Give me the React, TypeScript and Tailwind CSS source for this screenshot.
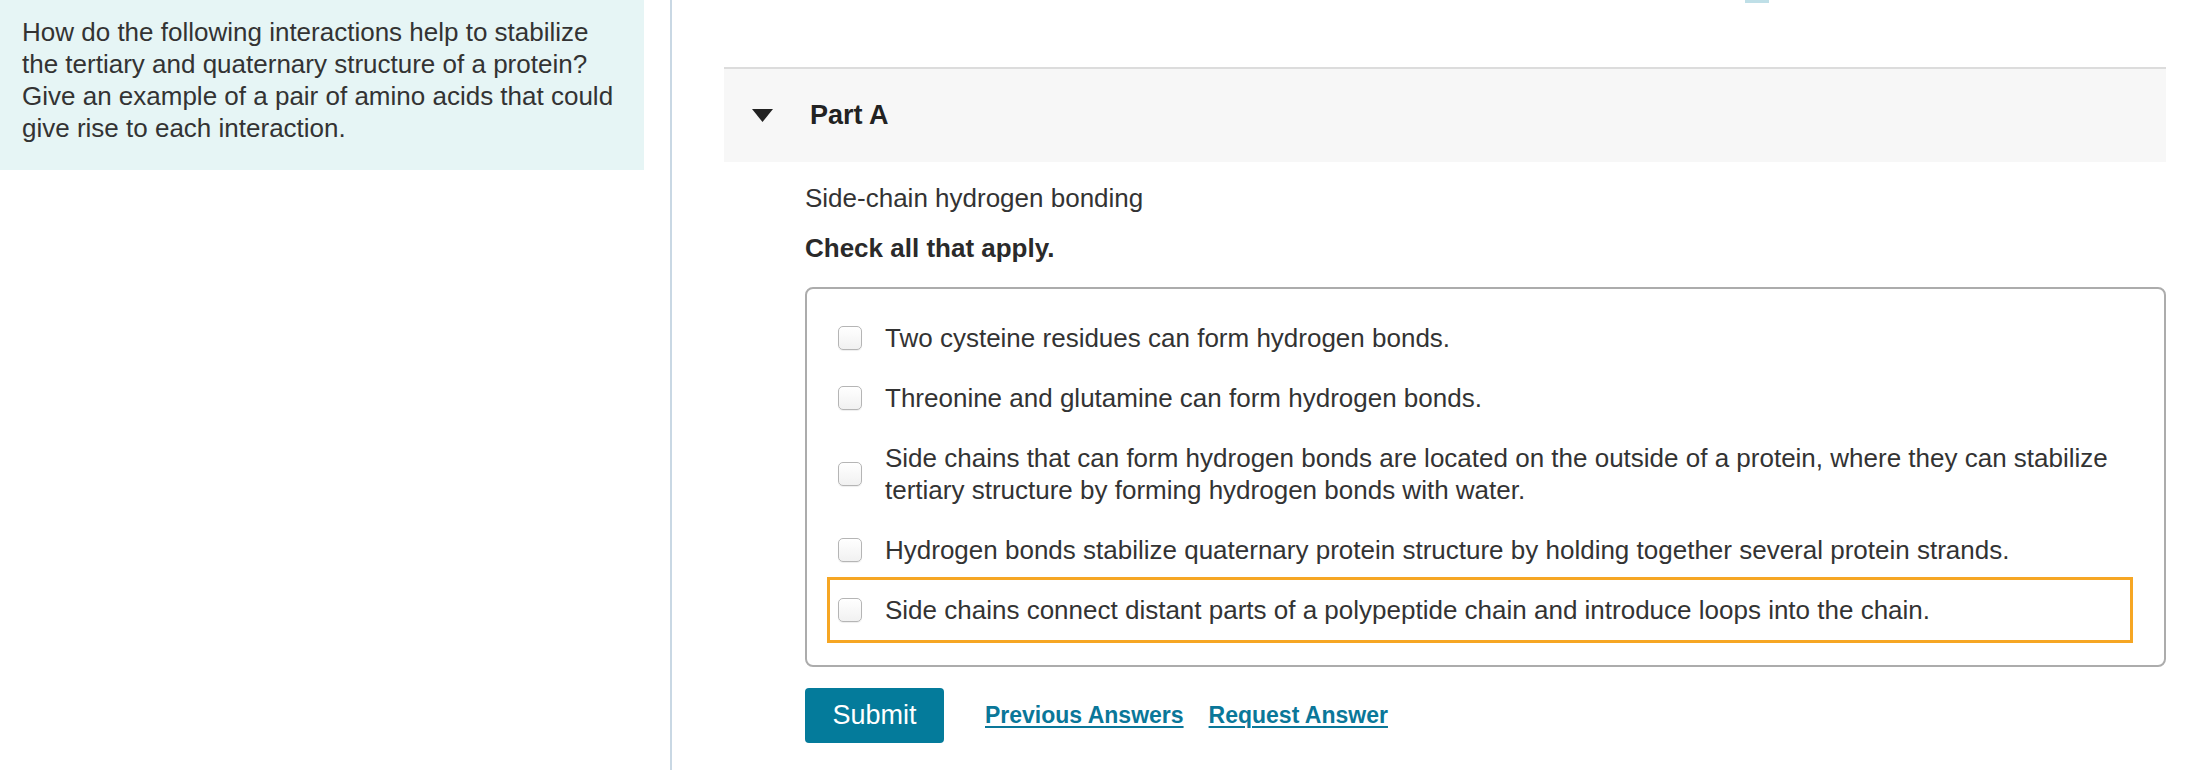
const options = [
  "Two cysteine residues can form hydrogen bonds.",
  "Threonine and glutamine can form hydrogen bonds.",
  "Side chains that can form hydrogen bonds are located on the outside of a protein, where they can stabilize tertiary structure by forming hydrogen bonds with water.",
  "Hydrogen bonds stabilize quaternary protein structure by holding together several protein strands.",
  "Side chains connect distant parts of a polypeptide chain and introduce loops into the chain.",
];

function CheckBox() {
  return (
    <span className="block h-[24px] w-[24px] shrink-0 rounded-[5px] border border-[#b5b5b5] bg-gradient-to-b from-white to-[#f1f1f1] shadow-[0_1px_1px_rgba(0,0,0,0.07)]" />
  );
}

export default function App() {
  return (
    <div className="flex h-[770px] w-[2192px] overflow-hidden bg-white font-['Liberation_Sans',Arial,sans-serif] text-[#333]">
      {/* question panel */}
      <div className="w-[644px] shrink-0">
        <div className="bg-[#e6f5f5] px-[22px] pt-[16px] pb-[26px] text-[26px] leading-[32px] text-[#333]">
          How do the following interactions help to stabilize the tertiary and
          quaternary structure of a protein? Give an example of a pair of amino
          acids that could give rise to each interaction.
        </div>
      </div>

      <div className="ml-[26px] w-[2px] shrink-0 bg-[#c9d8e4]" />

      <div className="flex-1 pl-[52px] pr-[26px]">
        {/* toolbar, scrolled almost out of view */}
        <div className="h-[67px]">
          <div className="flex h-[3px] justify-end overflow-hidden pr-[16px]">
            <div className="-mt-[21px] flex items-start gap-[24px] text-[22px] leading-[24px] text-[#b3d9e3]">
              <span className="mt-[2px] block h-[22px] w-[24px] bg-[#bfdfe7]" />
              <span>Review</span>
              <span>Constants</span>
              <span>Periodic Table</span>
            </div>
          </div>
        </div>

        {/* Part A header */}
        <div className="flex h-[95px] items-center border-t-[2px] border-[#dcdcdc] bg-[#f7f7f7] pl-[28px]">
          <svg width="21" height="13" viewBox="0 0 21 13" className="shrink-0">
            <path d="M0 0 L21 0 L10.5 13 Z" fill="#222" />
          </svg>
          <span className="ml-[37px] text-[27px] font-bold text-[#222]">Part A</span>
        </div>

        <div className="pl-[81px]">
          <p className="mt-[20px] text-[26px] leading-[32px]">Side-chain hydrogen bonding</p>
          <p className="mt-[18px] text-[26px] font-bold leading-[32px] text-[#2a2a2a]">
            Check all that apply.
          </p>

          <div className="mt-[23px] rounded-[8px] border-2 border-[#acacac] pl-[23px] pr-[34px] pt-[19px] pb-[25px]">
            {options.map((text, i) => (
              <div
                key={i}
                className={
                  i === options.length - 1
                    ? "flex items-center py-[14px] pl-[8px] ring-[3px] ring-[#f6a623]"
                    : "flex items-center py-[14px] pl-[8px]"
                }
              >
                <CheckBox />
                <span className="ml-[23px] text-[26px] leading-[32px] text-[#333]">{text}</span>
              </div>
            ))}
          </div>

          <div className="mt-[21px] flex items-center">
            <button className="h-[55px] w-[139px] rounded-[4px] bg-[#047b9b] text-[27px] text-white">
              Submit
            </button>
            <a className="ml-[41px] text-[23px] font-bold text-[#0a7799] underline decoration-2 underline-offset-[3px]">
              Previous Answers
            </a>
            <a className="ml-[25px] text-[23px] font-bold text-[#0a7799] underline decoration-2 underline-offset-[3px]">
              Request Answer
            </a>
          </div>
        </div>
      </div>
    </div>
  );
}
